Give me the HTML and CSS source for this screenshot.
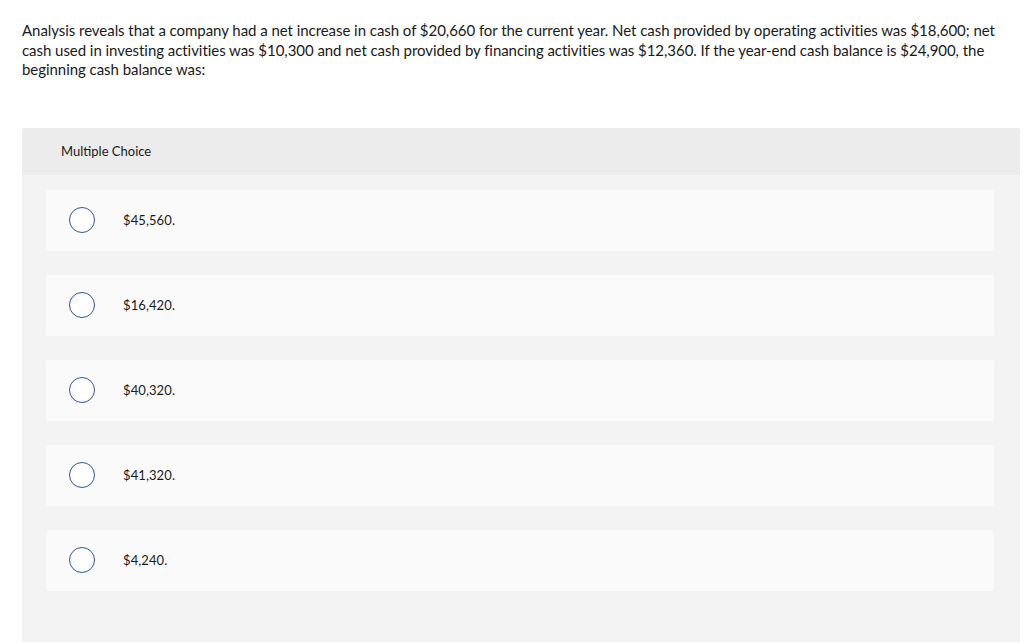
FILE: index.html
```html
<!DOCTYPE html>
<html lang="en">
<head>
<meta charset="utf-8">
<title>Multiple Choice</title>
<link rel="stylesheet" href="styles.css">
</head>
<body>
<main class="page">
  <p class="question">Analysis reveals that a company had a net increase in cash of $20,660 for the current year. Net cash provided by operating activities was $18,600; net cash used in investing activities was $10,300 and net cash provided by financing activities was $12,360. If the year-end cash balance is $24,900, the beginning cash balance was:</p>
  <section class="panel">
    <header class="panel-head">Multiple Choice</header>
    <div class="options">
      <label class="option"><span class="radio"></span><span class="opt-text">$45,560.</span></label>
      <label class="option"><span class="radio"></span><span class="opt-text">$16,420.</span></label>
      <label class="option"><span class="radio"></span><span class="opt-text">$40,320.</span></label>
      <label class="option"><span class="radio"></span><span class="opt-text">$41,320.</span></label>
      <label class="option"><span class="radio"></span><span class="opt-text">$4,240.</span></label>
    </div>
  </section>
</main>
</body>
</html>
```

FILE: styles.css
```css
html, body {
  margin: 0;
  padding: 0;
  background: #ffffff;
}
body {
  font-family: "Lato", "Liberation Sans", sans-serif;
  color: #1a1a1a;
}
.page {
  padding: 21px 0 0 22px;
}
.question {
  margin: 0;
  width: 984px;
  font-size: 15px;
  letter-spacing: -0.05px;
  line-height: 19.5px;
}
.panel {
  margin-top: 48px;
  width: 998px;
  height: 514px;
  background: #f3f3f3;
  border-radius: 3px 3px 0 0;
}
.panel-head {
  height: 47px;
  box-sizing: border-box;
  padding-left: 39px;
  display: flex;
  align-items: center;
  background: #ececec;
  font-size: 13px;
  border-radius: 3px 3px 0 0;
}
.options {
  display: flex;
  flex-direction: column;
  gap: 24px;
  padding: 15px 26px 0 24px;
}
.option {
  height: 61px;
  background: #fafafa;
  border-radius: 3px;
  display: flex;
  align-items: center;
  padding-left: 23px;
}
.radio {
  width: 24px;
  height: 24px;
  border: 1.3px solid #2c5896;
  border-radius: 50%;
  background: #ffffff;
  flex: none;
}
.opt-text {
  margin-left: 28px;
  font-size: 13px;
  letter-spacing: 0.1px;
}
```
